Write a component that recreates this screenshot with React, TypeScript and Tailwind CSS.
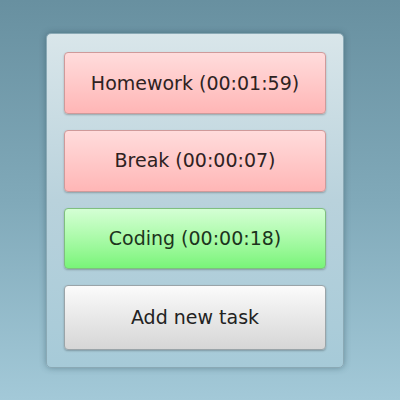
export default function App() {
  const tasks = [
    { id: "homework", label: "Homework (00:01:59)", tone: "red" },
    { id: "break", label: "Break (00:00:07)", tone: "red" },
    { id: "coding", label: "Coding (00:00:18)", tone: "green" },
  ]

  const toneClass: Record<string, string> = {
    red: "bg-gradient-to-b from-[#ffdcdc] to-[#ffb6b6] border-[#cf9a9a] text-[#2e2222]",
    green: "bg-gradient-to-b from-[#d4ffd4] to-[#78f478] border-[#7fbf7f] text-[#1c341c]",
  }

  return (
    <div className="w-[400px] h-[400px] bg-gradient-to-b from-[#6890a0] via-[#80a9b9] to-[#a3c9d8] flex items-start justify-start pl-[46px] pt-[33px] font-['DejaVu_Sans',sans-serif]">
      <div className="w-[298px] h-[335px] rounded-[5px] border border-[#8aa9b5] bg-gradient-to-b from-[#d9e6ea] via-[#b9d2dc] to-[#a6cad8] shadow-[0_0_6px_rgba(40,70,85,0.45)] px-[17px] pt-[18px] pb-[17px] flex flex-col gap-[16px]">
        {tasks.map((t) => (
          <button
            key={t.id}
            className={`h-[62px] w-[262px] rounded-[4px] border shadow-[0_1px_2px_rgba(0,0,0,0.25)] text-[19px] flex items-center justify-center ${toneClass[t.tone]}`}
          >
            {t.label}
          </button>
        ))}
        <button className="h-[65px] w-[262px] rounded-[4px] border border-[#9aa4a8] bg-gradient-to-b from-[#fbfbfb] to-[#d6d6d6] shadow-[0_1px_2px_rgba(0,0,0,0.25)] text-[19px] text-[#222] flex items-center justify-center">
          Add new task
        </button>
      </div>
    </div>
  )
}
